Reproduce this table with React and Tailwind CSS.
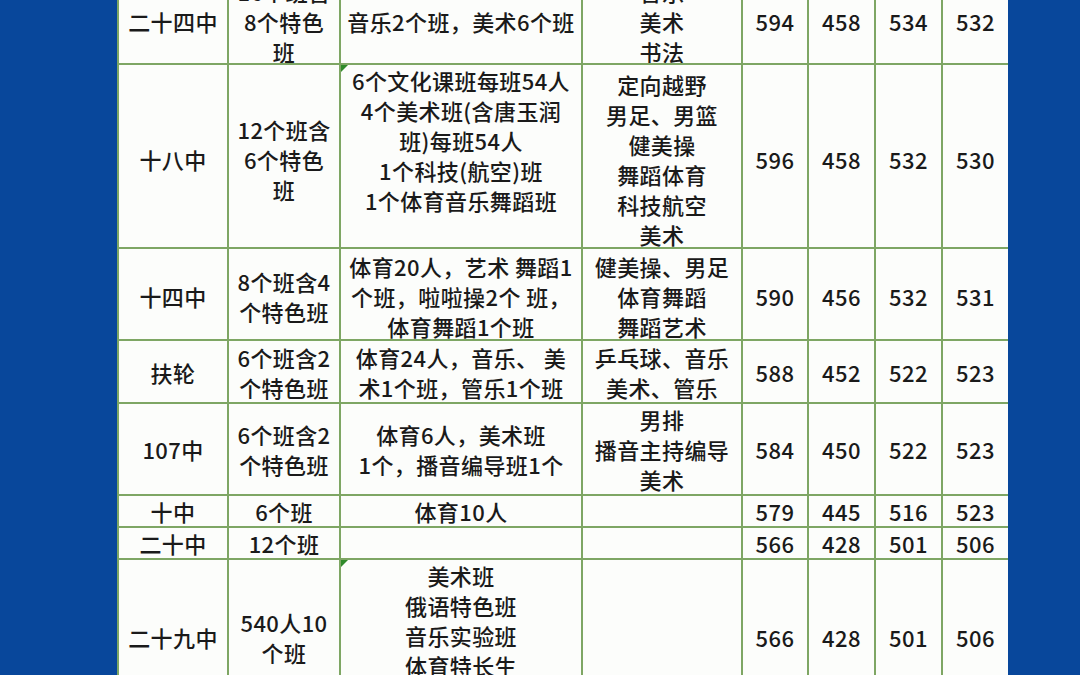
import React from "react";

const rows = [
  {
    h: "h-[85px]",
    name: ["二十四中"],
    cls: ["16个班含", "8个特色", "班"],
    detail: ["音乐2个班，美术6个班"],
    spec: ["音乐", "美术", "书法"],
    nums: ["594", "458", "534", "532"],
  },
  {
    h: "h-[184px]",
    pad: "pt-[5px]",
    name: ["十八中"],
    cls: ["12个班含", "6个特色", "班"],
    detail: ["6个文化课班每班54人", "4个美术班(含唐玉润", "班)每班54人", "1个科技(航空)班", "1个体育音乐舞蹈班"],
    top: true,
    mark: true,
    spec: ["定向越野", "男足、男篮", "健美操", "舞蹈体育", "科技航空", "美术"],
    nums: ["596", "458", "532", "530"],
  },
  {
    h: "h-[92px]",
    pad: "pt-[3px]",
    name: ["十四中"],
    cls: ["8个班含4", "个特色班"],
    detail: ["体育20人，艺术 舞蹈1", "个班，啦啦操2个 班，", "体育舞蹈1个班"],
    spec: ["健美操、男足", "体育舞蹈", "舞蹈艺术"],
    nums: ["590", "456", "532", "531"],
  },
  {
    h: "h-[63px]",
    name: ["扶轮"],
    cls: ["6个班含2", "个特色班"],
    detail: ["体育24人，音乐、 美", "术1个班，管乐1个班"],
    spec: ["乒乓球、音乐", "美术、管乐"],
    nums: ["588", "452", "522", "523"],
  },
  {
    h: "h-[92px]",
    name: ["107中"],
    cls: ["6个班含2", "个特色班"],
    detail: ["体育6人，美术班", "1个，播音编导班1个"],
    spec: ["男排", "播音主持编导", "美术"],
    nums: ["584", "450", "522", "523"],
  },
  {
    h: "h-[32px]",
    name: ["十中"],
    cls: ["6个班"],
    detail: ["体育10人"],
    spec: [],
    nums: ["579", "445", "516", "523"],
  },
  {
    h: "h-[32px]",
    name: ["二十中"],
    cls: ["12个班"],
    detail: [],
    spec: [],
    nums: ["566", "428", "501", "506"],
  },
  {
    h: "h-[156px]",
    name: ["二十九中"],
    cls: ["540人10", "个班"],
    detail: ["美术班", "俄语特色班", "音乐实验班", "体育特长生", "舞蹈班"],
    top: true,
    mark: true,
    spec: [],
    nums: ["566", "428", "501", "506"],
  },
];

function Cell({ lines, top, mark, last, pad }) {
  return (
    <div
      className={
        "relative flex flex-col items-center overflow-hidden " +
        (top ? "justify-start pt-0 " : "justify-center " + (pad || "") + " ") +
        (last ? "" : "border-r-2 border-[#7ea664]")
      }
    >
      {mark && (
        <div className="absolute left-0 top-0 h-0 w-0 border-t-[7px] border-r-[7px] border-t-[#2f8a2a] border-r-transparent" />
      )}
      {lines.map((l, i) => (
        <div key={i} className="whitespace-nowrap leading-[30px]">
          {l}
        </div>
      ))}
    </div>
  );
}

export default function App() {
  return (
    <div className="flex h-[675px] w-[1080px] overflow-hidden bg-[#08479b] font-['Noto_Sans_CJK_SC','Noto_Sans',sans-serif]">
      <div className="w-[117px] shrink-0" />
      <div className="w-[891px] shrink-0 border-l-2 border-[#7ea664] bg-[#fcfdfb] text-[22px] font-medium tracking-[0.4px] text-[#1a1a1a]">
        <div className="mt-[-22px] flex flex-col">
          {rows.map((r, i) => (
            <div
              key={i}
              className={
                "grid shrink-0 grid-cols-[110px_112px_242px_160px_66px_67px_67px_65px] border-b-2 border-[#7ea664] " +
                (i === 0 ? "h-[87px]" : r.h)
              }
            >
              <Cell lines={r.name} pad={r.pad} />
              <Cell lines={r.cls} pad={r.pad} />
              <Cell lines={r.detail} top={r.top} mark={r.mark} pad={r.pad} />
              <Cell lines={r.spec} pad={r.pad} />
              {r.nums.map((n, j) => (
                <Cell key={j} lines={[n]} last={j === 3} pad={r.pad} />
              ))}
            </div>
          ))}
        </div>
      </div>
      <div className="flex-1" />
    </div>
  );
}
